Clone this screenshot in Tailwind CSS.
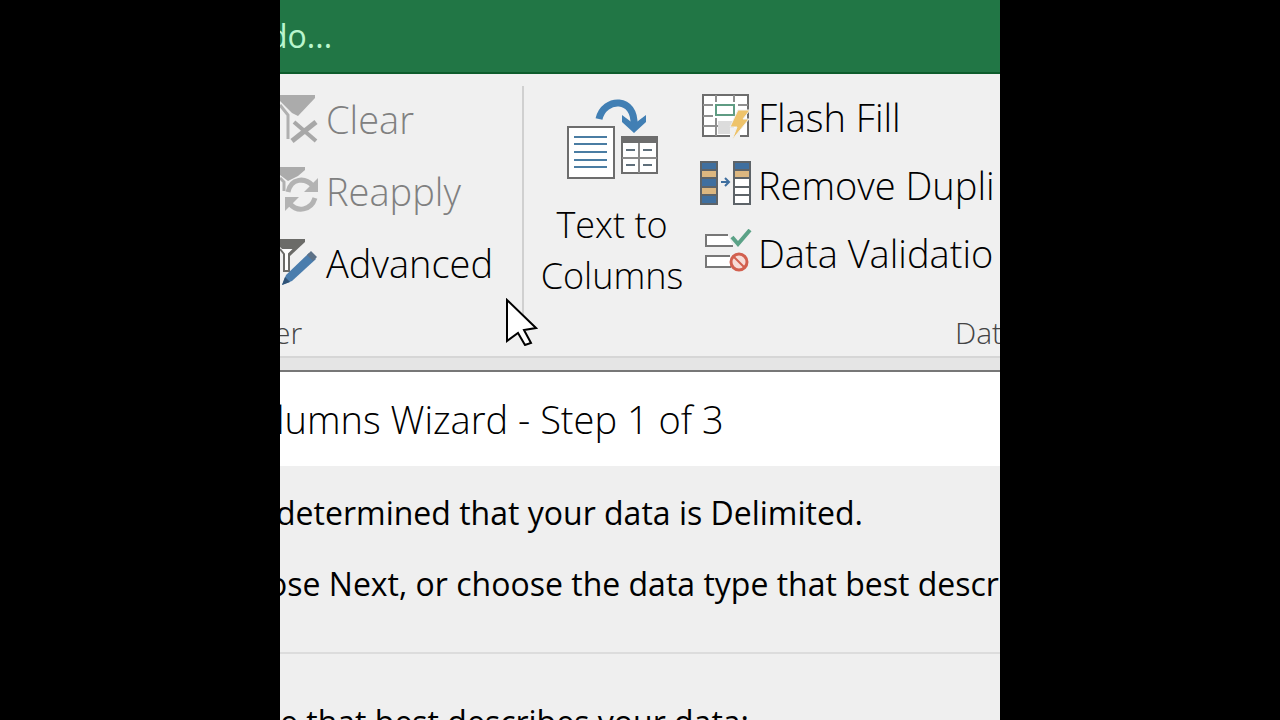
<!DOCTYPE html>
<html lang="en">
  <head>
    <meta charset="UTF-8" />
    <meta name="viewport" content="width=device-width, initial-scale=1.0" />
    <title>Text to Columns Wizard</title>
    <script src="https://cdn.jsdelivr.net/npm/@tailwindcss/browser@4"></script>
  </head>
  <body class="bg-black">
    <main
      class="relative mx-auto flex aspect-square h-screen flex-col overflow-hidden bg-[#efefef] font-['Open_Sans','Noto_Sans',sans-serif] font-light whitespace-nowrap text-black"
    >
      <!-- Title bar -->
      <header
        class="flex h-[74px] shrink-0 items-center border-b-2 border-[#0d5c2c] bg-[#217645]"
      >
        <span class="-ml-3 text-[32px] font-normal text-[#b9f5cd]">do...</span>
      </header>

      <!-- Ribbon -->
      <section class="flex h-[284px] shrink-0 border-b-2 border-[#d6d6d6] bg-[#f0f0f0]">
        <div class="flex w-[242px] shrink-0 flex-col pt-[9px]">
          <button class="flex h-[72px] shrink-0 items-center gap-1.5 text-[38px] text-[#808080]">
            <svg class="h-12 w-10" viewBox="0 0 40 48" fill="none">
              <path d="M0 0H35V3L18 21L12 18L0 6Z" fill="#ababab" />
              <path d="M0 10L8 20V44" stroke="#b0b0b0" stroke-width="3" />
              <path d="M12 46L36 27" stroke="#a8a8a8" stroke-width="5" />
              <path d="M14 27L36 46" stroke="#a8a8a8" stroke-width="4" />
            </svg>
            Clear
          </button>
          <button class="flex h-[72px] shrink-0 items-center gap-1.5 text-[38px] text-[#808080]">
            <svg class="h-12 w-10" viewBox="0 0 40 48" fill="none">
              <path d="M0 0H25V3L18 9L8 14L0 8Z" fill="#ababab" />
              <path d="M0 11L4 15V24" stroke="#b0b0b0" stroke-width="3" />
              <path d="M8 25C11 11 25 10 33 19" stroke="#b3b3b3" stroke-width="5" />
              <path d="M38 11V25H24Z" fill="#b3b3b3" />
              <path d="M35 31C31 44 17 45 10 37" stroke="#b3b3b3" stroke-width="5" />
              <path d="M5 44V30H19Z" fill="#b3b3b3" />
            </svg>
            Reapply
          </button>
          <button class="flex h-[72px] shrink-0 items-center gap-1.5 text-[38px]">
            <svg class="h-12 w-10" viewBox="0 0 40 48" fill="none">
              <path d="M0 0H25V3L10 17L0 8Z" fill="#6b6b68" />
              <path d="M0 10L4 15V32H9V15L14 10" fill="#fff" stroke="#6b6b68" stroke-width="2" />
              <path d="M2 46L6 36L29 14L36 20L12 42Z" fill="#4a7dad" />
              <path d="M27 16L31 12L37 18L33 22Z" fill="#5c7187" />
              <path d="M2 46L5 38L10 43Z" fill="#2f5377" />
            </svg>
            Advanced
          </button>
          <p class="-ml-1.5 flex h-[66px] shrink-0 items-center text-[30px] text-[#444]">er</p>
        </div>

        <div class="mt-3 h-[230px] w-0.5 shrink-0 bg-[#d0d0d0]"></div>

        <div class="min-w-0 grow pt-[9px]">
          <div class="flex h-[216px]">
            <button class="flex w-[176px] shrink-0 flex-col items-center pt-[15px] text-[36px] leading-[51px]">
              <svg class="mb-[17px] h-[84px] w-24 shrink-0" viewBox="-1 0 96 84" fill="none">
                <path d="M3 29H49V80H3Z" fill="#fff" stroke="#6d6d6d" stroke-width="2" />
                <path d="M9 39H42M9 46H42M9 54H42M9 62H42M9 69H42" stroke="#4a7da3" stroke-width="2" />
                <path d="M57 39H92V75H57Z" fill="#fff" stroke="#6d6d6d" stroke-width="2" />
                <path d="M56 38H93V45H56Z" fill="#6d6d6d" />
                <path d="M74 45V75M57 60H92" stroke="#8a8a8a" stroke-width="2" />
                <path d="M61 52H70M78 52H87M61 67H70M78 67H87" stroke="#5f6f7b" stroke-width="2" />
                <path d="M34 21C39 -1 71 -2 69 28" stroke="#417fb4" stroke-width="7" />
                <path d="M57 17L69 26L81 17V24L69 35L57 24Z" fill="#417fb4" />
              </svg>
              <span>Text to<br />Columns</span>
            </button>
            <div class="min-w-0 grow text-[38px]">
              <button class="flex h-[68px] items-center gap-1.5">
                <svg class="h-12 w-[52px] shrink-0" viewBox="0 0 52 48" fill="none">
                  <path d="M3 2H48V43H3Z" fill="#fff" stroke="#6d6d6d" stroke-width="2" />
                  <path d="M16 2V9M34 2V9M3 12H13M38 12H48M3 23H13M3 33H34M16 25V43" stroke="#8f8f8f" stroke-width="2" />
                  <path d="M18 28H34V41H18Z" fill="#dcdcdc" />
                  <path d="M16 12H34V22H16Z" fill="#fff" stroke="#5f9c83" stroke-width="2" />
                  <path d="M30 35H40V46H30Z" fill="#f0f0f0" />
                  <path d="M38 17H50L43 26H49L32 47L37 34H30Z" fill="#eec36a" stroke="#f0f0f0" />
                </svg>
                Flash Fill
              </button>
              <button class="flex h-[68px] items-center gap-1.5">
                <svg class="h-12 w-[52px] shrink-0" viewBox="0 0 52 48" fill="none">
                  <path d="M1 1H17V43H1Z" fill="#3f6f9f" />
                  <path d="M1 9H17V17H1ZM1 26H17V34H1Z" fill="#dcb780" />
                  <path d="M34 1H50V43H34Z" fill="#fff" />
                  <path d="M34 1H50V9H34Z" fill="#3f6f9f" />
                  <path d="M34 9H50V17H34Z" fill="#dcb780" />
                  <path d="M1 1H17V43H1ZM34 1H50V43H34ZM1 9H17M1 17H17M1 26H17M1 34H17M34 9H50M34 17H50M34 26H50M34 34H50" stroke="#5d6368" stroke-width="2" />
                  <path d="M21 21H29M25 17L29 21L25 25" stroke="#3f6f9f" stroke-width="2" />
                </svg>
                Remove Dupli
              </button>
              <button class="flex h-[68px] items-center gap-1.5">
                <svg class="h-12 w-[52px] shrink-0" viewBox="0 0 52 48" fill="none">
                  <path d="M28 6H6V17H33M30 27H6V38H31" fill="#fff" stroke="#777" stroke-width="2" />
                  <path d="M32 8L38 15L50 1" stroke="#5ba287" stroke-width="4" />
                  <circle cx="39" cy="33" r="8" fill="#f7dcd7" stroke="#d2604f" stroke-width="3" />
                  <path d="M33 27L45 39" stroke="#d2604f" stroke-width="2" />
                </svg>
                Data Validatio
              </button>
            </div>
          </div>
          <p class="flex h-[66px] items-center pl-[431px] text-[30px] text-[#444]">Dat</p>
        </div>
      </section>
      <div class="h-3.5 shrink-0 border-b-2 border-[#777] bg-[#e5e5e5]"></div>

      <!-- Wizard dialog -->
      <h1 class="-ml-1 flex h-[94px] shrink-0 items-center bg-white text-[38px]">
        lumns Wizard - Step 1 of 3
      </h1>
      <div class="grow text-[32px] font-normal">
        <p class="-ml-1 flex h-[94px] items-center">determined that your data is Delimited.</p>
        <p class="-ml-3 flex h-12 items-center">ose Next, or choose the data type that best descr</p>
        <hr class="mt-11 border-t-2 border-[#dcdcdc]" />
        <p class="mt-11 flex h-12 items-center">e that best describes your data:</p>
      </div>

      <!-- Mouse pointer -->
      <svg class="absolute top-[298px] left-[226px] h-12 w-8" viewBox="0 0 32 48">
        <path d="M1 2L30 30L18 32L25 45L19 47L12 35L1 43Z" fill="#fff" stroke="#000" stroke-width="2" />
      </svg>
    </main>
  </body>
</html>
